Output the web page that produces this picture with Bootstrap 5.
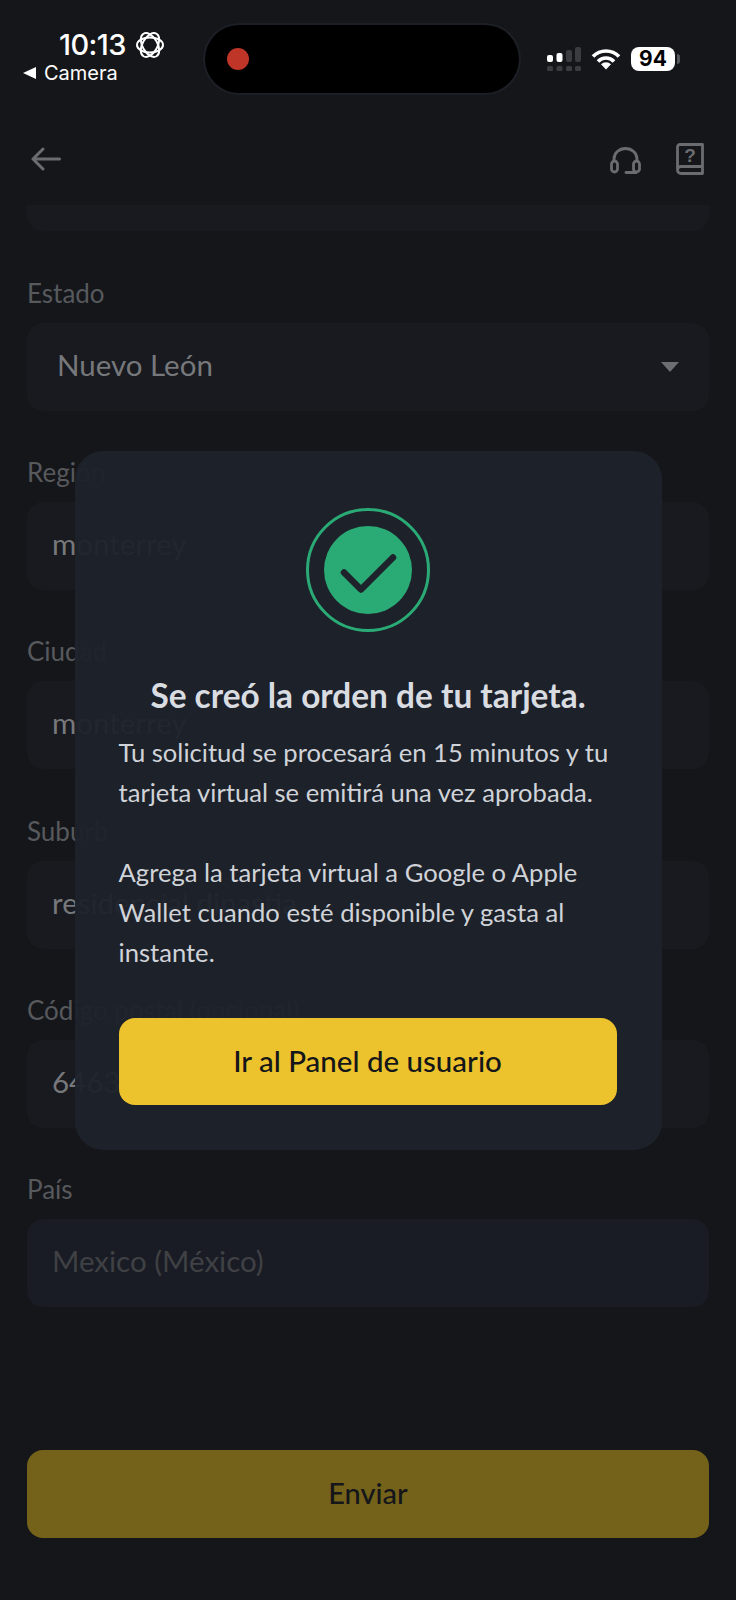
<!DOCTYPE html>
<html lang="es">
<head>
    <meta charset="UTF-8">
    <meta name="viewport" content="width=device-width, initial-scale=1.0">
    <title>Orden de tarjeta</title>
    <link href="https://cdn.jsdelivr.net/npm/bootstrap@5.3.5/dist/css/bootstrap.min.css" rel="stylesheet">
    <style>
        body {
            background-color: #14161a;
            font-family: Lato, "Liberation Sans", sans-serif;
        }
        .phone-screen {
            width: 736px;
            height: 1600px;
            background-color: #14161a;
            overflow: hidden;
        }
        /* status bar */
        .status-bar {
            height: 93px;
            padding-top: 25px;
            font-family: Inter, "Liberation Sans", sans-serif;
            color: #fff;
        }
        .status-left {
            width: 205px;
            padding-left: 23px;
        }
        .status-time {
            padding-left: 36px;
            padding-top: 2px;
            font-size: 29px;
            line-height: 36px;
            font-weight: 500;
            letter-spacing: -0.6px;
            gap: 10px;
        }
        .status-camera {
            font-size: 20px;
            line-height: 24px;
            margin-top: -2px;
        }
        .back-triangle {
            width: 0;
            height: 0;
            border-top: 6px solid transparent;
            border-bottom: 6px solid transparent;
            border-right: 13px solid #fff;
            margin-right: 8px;
        }
        .island {
            width: 314px;
            height: 68px;
            background-color: #000;
            border-radius: 34px;
            box-shadow: 0 0 0 2px #1c1f26;
            padding-left: 22px;
        }
        .rec-dot {
            width: 22px;
            height: 22px;
            border-radius: 50%;
            background-color: #bf3528;
        }
        .status-right {
            padding-left: 28px;
            margin-top: 22px;
        }
        .wifi-icon {
            margin-left: 10px;
        }
        .battery-body {
            width: 44px;
            height: 24px;
            border-radius: 8px;
            background-color: #fff;
            color: #000;
            font-size: 21px;
            font-weight: 700;
            line-height: 24px;
            text-align: center;
            margin-left: 10px;
        }
        .battery-tip {
            width: 3px;
            height: 10px;
            background-color: #55575b;
            border-radius: 0 3px 3px 0;
            margin-left: 2px;
        }
        /* top nav */
        .top-nav {
            height: 112px;
            padding: 50px 32px 30px 31px;
        }
        .nav-icons {
            gap: 35px;
        }
        /* form behind the dialog */
        .field-cut {
            height: 26px;
            margin: 0 27px;
            background-color: #181a1f;
            border-radius: 0 0 16px 16px;
        }
        .form-area {
            padding: 46px 27px 0;
        }
        .field-group {
            margin-bottom: 45.2px;
        }
        .form-area .form-label {
            display: block;
            height: 32px;
            line-height: 32px;
            margin-bottom: 14px;
            font-size: 26px;
            color: #57595d;
        }
        .form-area .form-control,
        .form-area .form-select {
            height: 88px;
            border: 0;
            border-radius: 16px;
            background-color: #181a1f;
            background-image: none;
            color: #77787b;
            font-size: 29.5px;
            line-height: 84px;
            padding: 0 25px;
        }
        .form-area .form-select {
            padding-left: 30px;
        }
        .form-area .field-locked {
            background-color: #191c24;
            color: #3f4144;
        }
        .select-caret {
            right: 30px;
            top: 39px;
            width: 0;
            height: 0;
            border-left: 9px solid transparent;
            border-right: 9px solid transparent;
            border-top: 10px solid #6d6e71;
        }
        .btn.btn-send {
            display: block;
            width: 682px;
            height: 88px;
            margin: 143px 27px 0;
            padding-bottom: 8px;
            border: 0;
            border-radius: 16px;
            background-color: #75621a;
            color: #14161a;
            font-size: 29px;
            font-weight: 500;
        }
        /* dialog */
        .dialog-layer {
            z-index: 10;
        }
        .dialog-panel {
            width: 587px;
            height: 699px;
            padding: 57px 44px 45px;
            border-radius: 28px;
            background-color: rgba(30, 34, 43, 0.95);
        }
        .dialog-title {
            margin: 43px 0 0;
            font-size: 33.4px;
            line-height: 40px;
            font-weight: 700;
            color: #d9dce1;
            text-align: center;
        }
        .dialog-text {
            margin: 17px 0 0;
            font-size: 25.6px;
            line-height: 40px;
            color: #d0d3d8;
        }
        .btn.btn-panel {
            display: block;
            width: 498px;
            height: 87px;
            margin-top: 46px;
            border: 0;
            border-radius: 16px;
            background-color: #ecc32c;
            color: #14161a;
            font-size: 29.5px;
            font-weight: 500;
        }
    </style>
</head>
<body class="m-0">
    <div class="phone-screen position-relative">
        <!-- Status bar -->
        <div class="status-bar d-flex align-items-start">
            <div class="status-left">
                <div class="status-time d-flex align-items-center">
                    <span>10:13</span>
                    <svg width="28" height="28" viewBox="0 0 28 28" fill="none" stroke="#fff" stroke-width="2">
                        <ellipse cx="14" cy="14" rx="13" ry="7.500"/>
                        <ellipse cx="14" cy="14" rx="13" ry="7.500" transform="rotate(60 14 14)"/>
                        <ellipse cx="14" cy="14" rx="13" ry="7.500" transform="rotate(120 14 14)"/>
                    </svg>
                </div>
                <div class="status-camera d-flex align-items-center">
                    <span class="back-triangle"></span>
                    <span>Camera</span>
                </div>
            </div>
            <div class="island d-flex align-items-center">
                <span class="rec-dot"></span>
            </div>
            <div class="status-right d-flex align-items-center">
                <svg width="34" height="24" viewBox="0 0 34 24">
                    <rect x="0" y="8" width="6" height="7" rx="2" fill="#fff"/>
                    <rect x="9.500" y="6" width="6" height="9" rx="2" fill="#fff"/>
                    <rect x="19" y="3" width="6" height="12" rx="2" fill="#3a3c40"/>
                    <rect x="28" y="0" width="6" height="15" rx="2" fill="#3a3c40"/>
                    <rect x="0" y="19" width="6" height="5" rx="1.500" fill="#3a3c40"/>
                    <rect x="9.500" y="19" width="6" height="5" rx="1.500" fill="#3a3c40"/>
                    <rect x="19" y="19" width="6" height="5" rx="1.500" fill="#3a3c40"/>
                    <rect x="28" y="19" width="6" height="5" rx="1.500" fill="#3a3c40"/>
                </svg>
                <svg class="wifi-icon" width="30" height="22" viewBox="0 0 30 22" fill="none" stroke="#fff" stroke-width="3.600">
                    <path d="M2 8.500a18 18 0 0 1 26 0"/>
                    <path d="M7 13.500a11 11 0 0 1 16 0"/>
                    <path d="M15 21.500l-5-5.200a7 7 0 0 1 10 0z" fill="#fff" stroke="none"/>
                </svg>
                <div class="battery-body">94</div>
                <span class="battery-tip"></span>
            </div>
        </div>

        <!-- Top nav -->
        <div class="top-nav d-flex justify-content-between align-items-start">
            <svg width="30" height="24" viewBox="0 0 30 24" fill="none" stroke="#6b6c70" stroke-width="3" stroke-linecap="round" stroke-linejoin="round" class="mt-1">
                <path d="M28.500 12H2M12 2L2 12l10 10"/>
            </svg>
            <div class="nav-icons d-flex align-items-start">
                <svg width="31" height="27" viewBox="0 0 31 27" fill="none" stroke="#6b6c70" stroke-width="2.800" class="mt-1">
                    <path d="M4 15v-3a11.500 10.500 0 0 1 23 0v3"/>
                    <rect x="1.500" y="14" width="6" height="11" rx="3"/>
                    <rect x="23.500" y="14" width="6" height="11" rx="3"/>
                    <path d="M26 25.500H16" stroke-linecap="round"/>
                </svg>
                <svg width="28" height="32" viewBox="0 0 28 32" fill="none" stroke="#6b6c70" stroke-width="2.800" stroke-linejoin="round">
                    <path d="M1.500 26V4a2.500 2.500 0 0 1 2.500-2.500h22.500v29H5a3.500 3.500 0 0 1-3.500-3.500v-1A3.500 3.500 0 0 1 5 23.500h21.500"/>
                    <text x="14" y="19" text-anchor="middle" fill="#6b6c70" stroke="none" font-family="Liberation Sans, sans-serif" font-size="19" font-weight="700">?</text>
                </svg>
            </div>
        </div>

        <!-- Form behind the dialog -->
        <div class="field-cut"></div>
        <form class="form-area">
            <div class="field-group">
                <label class="form-label">Estado</label>
                <div class="position-relative">
                    <div class="form-select">Nuevo León</div>
                    <span class="select-caret position-absolute"></span>
                </div>
            </div>
            <div class="field-group">
                <label class="form-label">Región</label>
                <div class="form-control">monterrey</div>
            </div>
            <div class="field-group">
                <label class="form-label">Ciudad</label>
                <div class="form-control">monterrey</div>
            </div>
            <div class="field-group">
                <label class="form-label">Suburb</label>
                <div class="form-control">residencial dinastia</div>
            </div>
            <div class="field-group">
                <label class="form-label">Código postal (opcional)</label>
                <div class="form-control">64639</div>
            </div>
            <div>
                <label class="form-label">País</label>
                <div class="form-control field-locked">Mexico (México)</div>
            </div>
        </form>
        <button type="button" class="btn btn-send">Enviar</button>

        <!-- Dialog -->
        <div class="dialog-layer position-absolute top-0 start-0 w-100 h-100 d-flex justify-content-center align-items-center">
            <div class="dialog-panel">
                <div class="d-flex justify-content-center">
                    <svg width="124" height="124" viewBox="0 0 124 124" fill="none">
                        <circle cx="62" cy="62" r="60.500" stroke="#2aab76" stroke-width="3"/>
                        <circle cx="62" cy="62" r="44" fill="#2aab76"/>
                        <path d="M38 64.500L55 81.500L87 49.500" stroke="#1e222b" stroke-width="6.500" stroke-linecap="round" stroke-linejoin="round"/>
                    </svg>
                </div>
                <h2 class="dialog-title">Se creó la orden de tu tarjeta.</h2>
                <p class="dialog-text">Tu solicitud se procesará en 15 minutos y tu tarjeta virtual se emitirá una vez aprobada.<br><br>Agrega la tarjeta virtual a Google o Apple Wallet cuando esté disponible y gasta al instante.</p>
                <button type="button" class="btn btn-panel">Ir al Panel de usuario</button>
            </div>
        </div>
    </div>

    <script src="https://cdn.jsdelivr.net/npm/bootstrap@5.3.5/dist/js/bootstrap.bundle.min.js"></script>
</body>
</html>
